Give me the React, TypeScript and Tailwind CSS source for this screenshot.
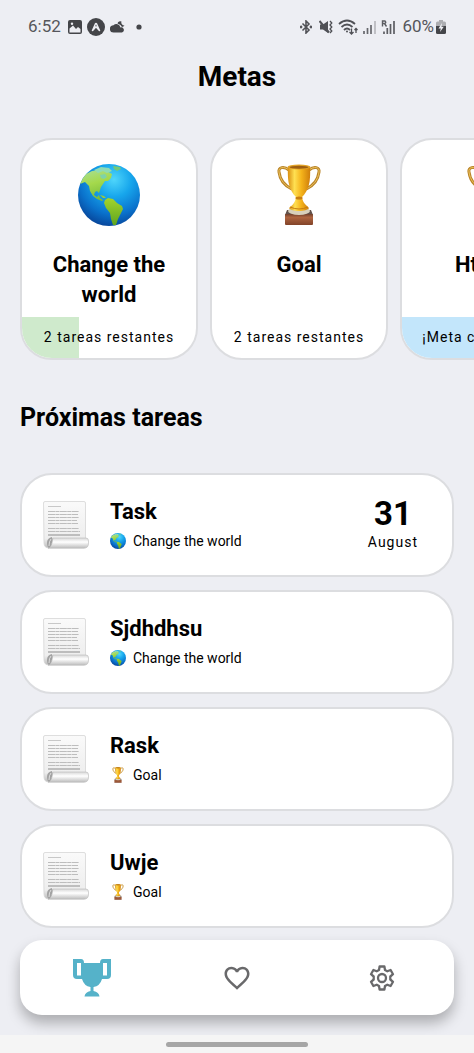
import React, { useId } from "react";

type IconProps = { className?: string };

function Globe({ className }: IconProps) {
  const id = useId();
  return (
    <svg viewBox="0 0 62 62" className={className} aria-hidden="true">
      <defs>
        <radialGradient id={`${id}sea`} cx="0.58" cy="0.25" r="0.8">
          <stop offset="0" stopColor="#4fd6fb" />
          <stop offset="0.35" stopColor="#17a6ec" />
          <stop offset="0.7" stopColor="#0a72cc" />
          <stop offset="1" stopColor="#073f93" />
        </radialGradient>
        <linearGradient id={`${id}north`} x1="0" y1="0" x2="0.3" y2="1">
          <stop offset="0" stopColor="#a9df9a" />
          <stop offset="0.5" stopColor="#a5d94c" />
          <stop offset="1" stopColor="#79bd3d" />
        </linearGradient>
        <linearGradient id={`${id}south`} x1="0" y1="0" x2="0" y2="1">
          <stop offset="0" stopColor="#a3d42c" />
          <stop offset="1" stopColor="#5fa51f" />
        </linearGradient>
        <clipPath id={`${id}clip`}>
          <circle cx="31" cy="31" r="31" />
        </clipPath>
      </defs>
      <g clipPath={`url(#${id}clip)`}>
        <rect width="62" height="62" fill={`url(#${id}sea)`} />
        <path
          d="M2 20 L6 11 L14 7 L22 6 L29 7 L34 10 L33 14 L30 17 L27 17 L25 20 L23 23 L22 26 L21 29 L19 27 L17 28 L16 31 L19 33 L21 31 L22 34 L25 36 L24 37 L19 35 L15 32 L12 27 L11 22 L7 18 Z"
          fill={`url(#${id}north)`}
        />
        <path d="M16 6 L23 3 L31 4 L34 7 L29 9 L25 7 L20 9 Z" fill="#8edbb4" />
        <path d="M35 2 L42 3 L43 5 L39 7 L36 5 Z" fill="#73c879" />
        <path d="M22 11 L27 10 L29 13 L26 15 L23 14 Z" fill="#7fd3a8" />
        <path d="M22 31 L26 32 L28 34 L25 34 Z" fill="#93c845" />
        <path
          d="M27 36 L30 34 L35 35 L39 39 L44 42 L45 45 L42 51 L40 55 L38 61 L35 61 L33 55 L32 49 L28 44 L26 39 Z"
          fill={`url(#${id}south)`}
        />
      </g>
    </svg>
  );
}

function GoldTrophy({ className }: IconProps) {
  const id = useId();
  return (
    <svg viewBox="0 0 62 62" className={className} aria-hidden="true">
      <defs>
        <linearGradient id={`${id}cup`}>
          <stop offset="0" stopColor="#d98e10" />
          <stop offset="0.3" stopColor="#ffe052" />
          <stop offset="0.6" stopColor="#f5b41b" />
          <stop offset="1" stopColor="#cf7e0b" />
        </linearGradient>
        <linearGradient id={`${id}wood`} x1="0" y1="0" x2="0" y2="1">
          <stop offset="0" stopColor="#70402d" />
          <stop offset="0.3" stopColor="#ae6540" />
          <stop offset="1" stopColor="#824329" />
        </linearGradient>
      </defs>
      <path
        d="M21 6 C16 2 10 3 11 8 C12 16 17 22 24 25 M41 6 C46 2 52 3 51 8 C50 16 45 22 38 25"
        fill="none"
        stroke="#b98327"
        strokeWidth="3"
      />
      <path
        d="M21 6 C16 2 10 3 11 8 C12 16 17 22 24 25 M41 6 C46 2 52 3 51 8 C50 16 45 22 38 25"
        fill="none"
        stroke="#ecc35e"
        strokeWidth="1"
      />
      <path d="M19 46 L43 46 L45 51 L17 51 Z" fill="#61514b" />
      <rect x="17" y="50" width="28" height="11" rx="1" fill={`url(#${id}wood)`} />
      <ellipse cx="31" cy="47" rx="11" ry="4" fill="#d8d0bb" />
      <path
        d="M28 31 H34 C34 38 37 40 41 44 C39 48 23 48 21 44 C26 40 28 37 28 31Z"
        fill={`url(#${id}cup)`}
      />
      <path
        d="M20 3 H42 C43 19 40 27 34 33 H28 C22 27 19 19 20 3Z"
        fill={`url(#${id}cup)`}
      />
      <ellipse cx="31" cy="3" rx="11.5" ry="2.6" fill="#e2a327" />
      <ellipse cx="31" cy="3.3" rx="9.5" ry="1.5" fill="#9d5f12" />
      <ellipse cx="31" cy="34" rx="3.5" ry="1.5" fill="#c87e12" />
      <path d="M22 43 Q31 47 40 43" fill="none" stroke="#c47a11" />
    </svg>
  );
}

function Scroll({ className }: IconProps) {
  const id = useId();
  return (
    <svg viewBox="0 0 46 48" className={className} aria-hidden="true">
      <defs>
        <linearGradient id={`${id}page`} x1="0" y1="0" x2="0" y2="1">
          <stop offset="0" stopColor="#fafafa" />
          <stop offset="0.8" stopColor="#eeeeee" />
          <stop offset="1" stopColor="#bdbdbd" />
        </linearGradient>
        <linearGradient id={`${id}roll`} x1="0" y1="0" x2="0" y2="1">
          <stop offset="0" stopColor="#d8d8d8" />
          <stop offset="0.4" stopColor="#ffffff" />
          <stop offset="1" stopColor="#bcbcbc" />
        </linearGradient>
      </defs>
      <path
        d="M2 0.5 H41 Q42.500 0.500 42.500 2 V40 H8 L6 47 Q1 47 1 42 L0.500 2 Q0.500 0.500 2 0.500Z"
        fill={`url(#${id}page)`}
        stroke="#d5d5d5"
        strokeWidth="0.8"
      />
      <path d="M5 5.500 H18" stroke="#c8c8c8" strokeWidth="1" />
      <path
        d="M5 10.500 H36 M5 13.500 H35 M5 16.500 H36 M5 19.500 H34 M5 22.500 H35 M5 27.500 H36 M5 30.500 H37"
        stroke="#bdbdbd"
        strokeWidth="1"
        strokeDasharray="7 0.4 4 0.4"
      />
      <path d="M5 34 H37" stroke="#9c9c9c" strokeWidth="1.2" />
      <path
        d="M10 37 H43 Q45.500 37 45.500 40 V42 Q45.500 47.200 41 47.200 H5 Q9 46 9.500 39 Z"
        fill={`url(#${id}roll)`}
        stroke="#c0c0c0"
        strokeWidth="0.7"
      />
      <path d="M9 36 Q4 37 4 42 Q4 46 6 47 Q9 45 9.500 38Z" fill="#a2a2a2" />
      <path d="M8 38 Q6 40 6 45" stroke="#dedede" fill="none" />
    </svg>
  );
}

function StatusLeft() {
  return (
    <div className="flex items-center gap-[5px]">
      <span className="mr-[2px] text-[17px]">6:52</span>
      <svg viewBox="0 0 14 14" className="size-[14px]" aria-hidden="true">
        <rect width="14" height="14" rx="2" fill="#444549" />
        <path d="M1.500 8.500 L5 5.500 L8 9 L10 7 L12.500 9 V12.500 H1.500Z" fill="#edeef3" />
        <circle cx="4" cy="3.800" r="1.200" fill="#edeef3" />
      </svg>
      <svg viewBox="0 0 18 18" className="size-[18px]" aria-hidden="true">
        <circle cx="9" cy="9" r="9" fill="#444549" />
        <path
          d="M5.500 12.500 L8.400 6 Q9 5 9.600 6 L12.500 12.500 M5.800 12.300 L9 8.800 L12.200 12.300"
          fill="none"
          stroke="#edeef3"
          strokeWidth="1.500"
          strokeLinecap="round"
          strokeLinejoin="round"
        />
      </svg>
      <svg viewBox="0 0 15 12" className="h-[12px] w-[15px]" aria-hidden="true" fill="#444549">
        <path d="M3.500 11.500 A3.600 3.600 0 0 1 3.500 4.300 A4 4 0 0 1 9.500 4.500 L10.500 6.500 A2.600 2.600 0 0 1 12 11.500Z" />
        <path d="M7.500 2.500 A3 3 0 0 1 11.500 0.500 A3 3 0 0 0 14.500 4.500 A3 3 0 0 1 12 6 L10.500 4Z" />
      </svg>
      <svg viewBox="0 0 6 6" className="ml-[6px] size-[6px]" aria-hidden="true">
        <circle cx="3" cy="3" r="2.600" fill="#444549" />
      </svg>
    </div>
  );
}

function StatusRight() {
  return (
    <div className="flex items-center gap-[5px]">
      <svg viewBox="0 0 12 14" className="mr-[2px] h-[14px] w-[12px]" aria-hidden="true" fill="none" stroke="#505156" strokeWidth="1.600">
        <path d="M2.500 3.500 L9 10 L6 13 V1 L9 4 L2.500 10.500" />
        <circle cx="1" cy="7" r="0.600" />
        <circle cx="11" cy="7" r="0.600" />
      </svg>
      <svg viewBox="0 0 14 14" className="size-[14px]" aria-hidden="true">
        <path d="M1 4.500 H4 L9 1 V13 L4 9.500 H1Z" fill="#505156" />
        <path d="M0.500 1 L10 12.500" stroke="#505156" strokeWidth="2" />
        <path d="M11 1 L12.800 3 L11 5 L12.800 7 L11 9 L12.800 11 L11 13" stroke="#505156" strokeWidth="1.300" fill="none" />
      </svg>
      <svg viewBox="0 0 20 16" className="h-[16px] w-[20px]" aria-hidden="true" fill="none" stroke="#505156" strokeWidth="1.800">
        <path d="M1 5 Q9 -2 17 5 M3.500 8 Q9 3 14.500 8 M6 11 Q9 8 12 11" />
        <circle cx="9" cy="12.500" r="1" fill="#505156" stroke="none" />
        <path d="M13.500 9.500 V15 M11.500 13 L13.500 15 L15.500 13 M18 14 V9 M16.500 11 L18 9.500 L19.500 11" strokeWidth="1.300" />
      </svg>
      <svg viewBox="0 0 13 14" className="h-[14px] w-[13px]" aria-hidden="true" strokeWidth="1.700" stroke="#66676c">
        <path d="M1 11 V14 M4.500 8 V14 M8 5 V14" />
        <path d="M12 1 V14" stroke="#b7b8bd" />
      </svg>
      <svg viewBox="0 0 14 14" className="h-[14px] w-[14px]" aria-hidden="true" stroke="#5c5d62" strokeWidth="1.700">
        <path d="M1.500 6.500 V1 H4 Q5.500 2.400 4 3.500 H1.500 M3.500 3.500 L5.500 6.500" fill="none" strokeWidth="1.400" />
        <path d="M3 11.500 V14 M6.300 8 V14 M9.500 4 V14 M13 1 V14" />
      </svg>
      <div className="ml-[2px] flex items-center gap-[2px]">
        <span className="text-[17px]">60%</span>
        <svg viewBox="0 0 10 14" className="h-[14px] w-[10px]" aria-hidden="true">
          <path d="M3 0 H7 V1.500 H8.500 Q10 1.500 10 3 V6 H0 V3 Q0 1.500 1.500 1.500 H3Z" fill="#adaeb2" />
          <path d="M0 6 H10 V12.500 Q10 14 8.500 14 H1.500 Q0 14 0 12.500Z" fill="#444549" />
          <path d="M6 3 L2.500 8.500 H4.800 L4 12 L7.800 6.800 H5.500Z" fill="#edeef3" />
        </svg>
      </div>
    </div>
  );
}

type Goal = {
  name: string;
  icon: "globe" | "trophy";
  status: string;
  progress: number;
  bar: string;
};

const goals: Goal[] = [
  { name: "Change the world", icon: "globe", status: "2 tareas restantes", progress: 33, bar: "bg-[#cfeacc]" },
  { name: "Goal", icon: "trophy", status: "2 tareas restantes", progress: 0, bar: "bg-[#cfeacc]" },
  { name: "Htdhdr", icon: "trophy", status: "¡Meta completada!", progress: 100, bar: "bg-[#c3e6fb]" },
];

type Task = { name: string; goal: string; icon: "globe" | "trophy"; day?: string; month?: string };

const tasks: Task[] = [
  { name: "Task", goal: "Change the world", icon: "globe", day: "31", month: "August" },
  { name: "Sjdhdhsu", goal: "Change the world", icon: "globe" },
  { name: "Rask", goal: "Goal", icon: "trophy" },
  { name: "Uwje", goal: "Goal", icon: "trophy" },
];

function GoalCard({ goal }: { goal: Goal }) {
  const Icon = goal.icon === "globe" ? Globe : GoldTrophy;
  return (
    <article className="flex h-[222px] w-[178px] shrink-0 flex-col items-center overflow-hidden rounded-[32px] border-2 border-[#dcdde0] bg-white">
      <Icon className="mt-6 size-[62px] shrink-0" />
      <h2 className="mt-6 px-4 text-center text-[22px] leading-[30px] font-bold">{goal.name}</h2>
      <div className="relative mt-auto flex h-[41px] w-full items-center justify-center">
        <div className={`absolute inset-y-0 left-0 ${goal.bar}`} style={{ width: `${goal.progress}%` }} />
        <span className="relative text-[14px] tracking-[1px] whitespace-nowrap">{goal.status}</span>
      </div>
    </article>
  );
}

function TaskCard({ task }: { task: Task }) {
  const Icon = task.icon === "globe" ? Globe : GoldTrophy;
  return (
    <li className="flex h-[104px] items-center rounded-[32px] border-2 border-[#dcdde0] bg-white pr-[34px] pl-[21px]">
      <Scroll className="h-[48px] w-[46px] shrink-0" />
      <div className="ml-[21px] flex-1 pb-[2px]">
        <h3 className="text-[22px] leading-[30px] font-bold">{task.name}</h3>
        <p className="mt-1 flex items-center gap-[7px] text-[14px] leading-5">
          <Icon className="size-4" />
          {task.goal}
        </p>
      </div>
      {task.day && (
        <div className="flex flex-col items-center">
          <span className="text-[33px] leading-8 font-bold">{task.day}</span>
          <span className="mt-[2px] text-[14px] leading-5 tracking-[1px]">{task.month}</span>
        </div>
      )}
    </li>
  );
}

export default function App() {
  return (
    <div className="flex min-h-screen flex-col bg-[#edeef3] font-['Roboto',sans-serif] text-black">
      <div className="flex h-[54px] items-center justify-between px-[28px] text-[#55565b]">
        <StatusLeft />
        <StatusRight />
      </div>
      <header className="flex h-[46px] items-center justify-center">
        <h1 className="text-[28px] font-bold">Metas</h1>
      </header>
      <main className="flex flex-col">
        <section
          aria-label="Metas"
          className="mt-[38px] flex gap-3 overflow-x-auto px-5 [scrollbar-width:none]"
        >
          {goals.map((goal) => (
            <GoalCard key={goal.name} goal={goal} />
          ))}
        </section>
        <section className="px-5">
          <h2 className="mt-[42px] text-[25px] leading-8 font-bold">Próximas tareas</h2>
          <ul className="mt-[39px] flex flex-col gap-[13px]">
            {tasks.map((task) => (
              <TaskCard key={task.name} task={task} />
            ))}
          </ul>
        </section>
      </main>
      <nav
        aria-label="Principal"
        className="mx-5 mt-3 grid h-[75px] grid-cols-3 rounded-[22px] bg-white shadow-[0_8px_14px_rgba(0,0,0,0.28)]"
      >
        <button type="button" aria-label="Metas" className="flex items-center justify-center">
          <svg viewBox="0 0 38 38" className="size-[38px]" aria-hidden="true" fill="#55b2c9">
            <path
              fillRule="evenodd"
              d="M0 0 H8 Q11 0 11 4 H27 Q27 0 30 0 H38 V16 Q38 20 34 20 H29 Q27 27 20.500 28 V32 Q26 33 26.500 37.500 H11.500 Q12 33 17.500 32 V28 Q11 27 9 20 H4 Q0 20 0 16Z M4 4 V16.500 H8 V4Z M30 4 V16.500 H34 V4Z"
            />
          </svg>
        </button>
        <button type="button" aria-label="Favoritos" className="flex items-center justify-center">
          <svg viewBox="0 0 24 24" className="size-[30px]" aria-hidden="true" fill="#69696b">
            <path d="M16.500 3c-1.740 0-3.410.81-4.500 2.090C10.910 3.810 9.240 3 7.500 3 4.420 3 2 5.420 2 8.500c0 3.780 3.400 6.860 8.550 11.540L12 21.350l1.450-1.320C18.600 15.360 22 12.280 22 8.500 22 5.420 19.580 3 16.500 3zm-4.400 15.550-.1.1-.1-.1C7.140 14.240 4 11.390 4 8.500 4 6.500 5.500 5 7.500 5c1.540 0 3.040.99 3.570 2.360h1.870C13.460 5.990 14.960 5 16.500 5c2 0 3.500 1.500 3.500 3.500 0 2.890-3.140 5.740-7.900 10.050z" />
          </svg>
        </button>
        <button type="button" aria-label="Ajustes" className="flex items-center justify-center">
          <svg
            viewBox="0 0 26 26"
            className="size-[26px]"
            aria-hidden="true"
            fill="none"
            stroke="#69696b"
            strokeWidth="2.300"
            strokeLinejoin="round"
          >
            <path d="M10.600 1.500 H15.400 L16 5 L18.300 6.300 L21.600 5 L24 9.200 L21.300 11.500 V14.500 L24 16.800 L21.600 21 L18.300 19.700 L16 21 L15.400 24.500 H10.600 L10 21 L7.700 19.700 L4.400 21 L2 16.800 L4.700 14.500 V11.500 L2 9.200 L4.400 5 L7.700 6.300 L10 5Z" />
            <circle cx="13" cy="13" r="4" />
          </svg>
        </button>
      </nav>
      <footer className="relative mt-auto flex h-[18px] items-center justify-center bg-[#f5f5f5]">
        <div className="h-[5px] w-[30%] rounded-full bg-[#a6a6a6]" />
      </footer>
    </div>
  );
}
